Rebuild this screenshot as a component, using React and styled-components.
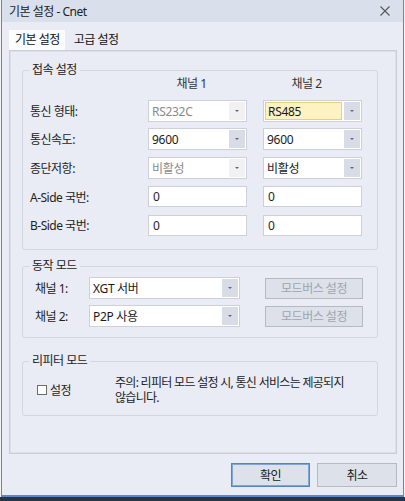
import React from 'react'
import styled, { createGlobalStyle } from 'styled-components'

const Global = createGlobalStyle`
  html, body { margin: 0; padding: 0; }
  body {
    background: #f2f3f5;
    font-family: "Noto Sans", "Noto Sans CJK KR", sans-serif;
    font-size: 12px;
    color: #1e1e1e;
  }
`

const Screen = styled.div`
  width: 405px;
  height: 501px;
  display: flex;
  flex-direction: column;
  overflow: hidden;
`

const Window = styled.div`
  margin-left: 1px;
  width: 403px;
  height: 497px;
  box-sizing: border-box;
  border: 1px solid #5a8ac6;
  border-top: none;
  border-bottom-width: 2px;
  background: #e9ecf5;
  display: flex;
  flex-direction: column;
`

const Taskbar = styled.div`
  flex: 1;
  background: #27344a;
`

const TitleBar = styled.div`
  height: 22px;
  flex-shrink: 0;
  background: #dae0eb;
  display: flex;
  align-items: center;
  justify-content: space-between;
  padding: 0 13px 0 7px;
`

const Title = styled.span`
  letter-spacing: -0.5px;
  color: #222;
`

const Close = styled.svg`
  width: 10px;
  height: 10px;
`

const Body = styled.div`
  flex: 1;
  display: flex;
  flex-direction: column;
  padding: 8px 6px 8px 7px;
  min-height: 0;
`

const Tabs = styled.div`
  display: flex;
  height: 20px;
`

const Tab = styled.div`
  padding: 0 5px 0 6px;
  line-height: 20px;
  letter-spacing: -0.5px;
  background: ${p => (p.$active ? '#fbfcfe' : 'transparent')};
  margin-right: ${p => (p.$active ? '3px' : '0')};
  color: #111;
`

const Panel = styled.div`
  flex: 1;
  box-sizing: border-box;
  border: 1px solid #c9cdd8;
  box-shadow: inset 0 0 0 1px #dde0e9;
  padding: 11px 18px 0 12px;
  display: flex;
  flex-direction: column;
`

const Group = styled.fieldset`
  margin: ${p => p.$gap || 0}px 0 0;
  padding: 0;
  border: 1px solid #d2d6e0;
  border-radius: 3px;
  min-width: 0;
`

const Legend = styled.legend`
  margin-left: 6px;
  padding: 0 3px;
  line-height: 16px;
  letter-spacing: -0.5px;
  color: #222;
`

const ConnGrid = styled.div`
  display: grid;
  grid-template-columns: 102px 99px 99px;
  column-gap: 16px;
  grid-template-rows: 19px 28px 28px 29px 29px 28px;
  align-items: center;
  padding: 0 0 10px 7px;
`

const ColHead = styled.div`
  align-self: start;
  line-height: 12px;
  text-align: center;
  padding-right: 12px;
  letter-spacing: -0.5px;
  color: #333;
`

const Label = styled.div`
  letter-spacing: -0.5px;
  color: #222;
  white-space: nowrap;
`

const ComboBox = styled.div`
  height: 22px;
  width: ${p => p.$w || 99}px;
  box-sizing: border-box;
  border: 1px solid #cdd0d9;
  background: #fff;
  display: flex;
  align-items: stretch;
`

const ComboText = styled.div`
  flex: 1;
  display: flex;
  align-items: center;
  padding-left: ${p => (p.$focus ? '2px' : '3px')};
  margin: ${p => (p.$focus ? '1px' : '0')};
  background: ${p => (p.$focus ? '#fdf2c2' : 'transparent')};
  border: ${p => (p.$focus ? '1px solid #e7cf80' : 'none')};
  color: ${p => (p.$disabled ? '#8a8a8a' : '#1a1a1a')};
  letter-spacing: -0.3px;
  white-space: nowrap;
`

const Drop = styled.div`
  width: 16px;
  margin: 1px;
  background: ${p => (p.$disabled ? '#f1f1f3' : '#d8dce7')};
  display: flex;
  align-items: center;
  justify-content: center;
`

const Arrow = styled.span`
  width: 0;
  height: 0;
  border-left: 2px solid transparent;
  border-right: 2px solid transparent;
  border-top: 2px solid #666;
`

const TextBox = styled.div`
  height: 21px;
  box-sizing: border-box;
  border: 1px solid #cdd0d9;
  background: #fff;
  padding-left: 4px;
  display: flex;
  align-items: center;
`

const ModeGrid = styled.div`
  display: grid;
  grid-template-columns: 54px 151px 98px;
  column-gap: 0;
  grid-template-rows: 28px 28px;
  align-items: center;
  padding: 0 0 7px 12px;
`

const Button = styled.button`
  height: ${p => p.$h || 22}px;
  width: ${p => p.$w || 98}px;
  margin-left: ${p => p.$offset || 0}px;
  box-sizing: border-box;
  font: inherit;
  letter-spacing: -0.5px;
  background: #dde1ea;
  border: 1px solid ${p => (p.$primary ? '#4f86c6' : '#b4b9c5')};
  box-shadow: ${p => (p.$primary ? 'inset 0 0 0 1px #7fa6d4' : 'none')};
  color: ${p => (p.$disabled ? '#a0a4ae' : '#1a1a1a')};
  padding: 0;
`

const RepeaterRow = styled.div`
  display: flex;
  align-items: center;
  padding: 6px 0 10px 14px;
`

const Check = styled.label`
  width: 78px;
  display: flex;
  align-items: center;
  gap: 3px;
  letter-spacing: -0.5px;
`

const CheckBox = styled.span`
  width: 10px;
  height: 10px;
  box-sizing: border-box;
  border: 1px solid #6d6d6d;
  background: #fff;
`

const Note = styled.div`
  width: 252px;
  line-height: 15px;
  letter-spacing: -0.7px;
  word-break: keep-all;
  color: #222;
`

const Footer = styled.div`
  display: flex;
  justify-content: flex-end;
  gap: 7px;
  margin-top: 9px;
`

const Combo = ({ value, disabled, focus, w }) => (
  <ComboBox $w={w}>
    <ComboText $disabled={disabled} $focus={focus}>{value}</ComboText>
    <Drop $disabled={disabled}><Arrow /></Drop>
  </ComboBox>
)

const rows = [
  ['통신 형태:', { v: 'RS232C', d: true }, { v: 'RS485', f: true }],
  ['통신속도:', { v: '9600' }, { v: '9600' }],
  ['종단저항:', { v: '비활성', d: true }, { v: '비활성' }],
]

export default function App() {
  return (
    <Screen>
      <Global />
      <Window>
        <TitleBar>
          <Title>기본 설정 - Cnet</Title>
          <Close viewBox="0 0 10 10">
            <path d="M0.5 0.5 L9.5 9.5 M9.5 0.5 L0.5 9.5" stroke="#555" strokeWidth="1.1" />
          </Close>
        </TitleBar>
        <Body>
          <Tabs>
            <Tab $active>기본 설정</Tab>
            <Tab>고급 설정</Tab>
          </Tabs>
          <Panel>
            <Group>
              <Legend>접속 설정</Legend>
              <ConnGrid>
                <div />
                <ColHead>채널 1</ColHead>
                <ColHead>채널 2</ColHead>
                {rows.map(([label, a, b]) => (
                  <React.Fragment key={label}>
                    <Label>{label}</Label>
                    <Combo value={a.v} disabled={a.d} focus={a.f} />
                    <Combo value={b.v} disabled={b.d} focus={b.f} />
                  </React.Fragment>
                ))}
                <Label>A-Side 국번:</Label>
                <TextBox>0</TextBox>
                <TextBox>0</TextBox>
                <Label>B-Side 국번:</Label>
                <TextBox>0</TextBox>
                <TextBox>0</TextBox>
              </ConnGrid>
            </Group>
            <Group $gap={8}>
              <Legend>동작 모드</Legend>
              <ModeGrid>
                <Label>채널 1:</Label>
                <Combo value="XGT 서버" w={151} />
                <Button $disabled $h={21} $offset={25}>모드버스 설정</Button>
                <Label>채널 2:</Label>
                <Combo value="P2P 사용" w={151} />
                <Button $disabled $h={21} $offset={25}>모드버스 설정</Button>
              </ModeGrid>
            </Group>
            <Group $gap={15}>
              <Legend>리피터 모드</Legend>
              <RepeaterRow>
                <Check><CheckBox />설정</Check>
                <Note>주의: 리피터 모드 설정 시, 통신 서비스는 제공되지 않습니다.</Note>
              </RepeaterRow>
            </Group>
          </Panel>
          <Footer>
            <Button $primary $w={79} $h={24}>확인</Button>
            <Button $w={80} $h={24}>취소</Button>
          </Footer>
        </Body>
      </Window>
      <Taskbar />
    </Screen>
  )
}
